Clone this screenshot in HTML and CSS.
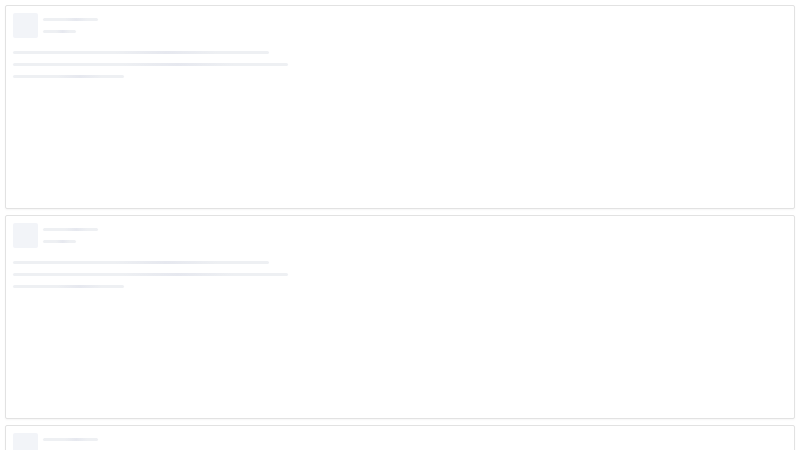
FILE: index.html
```html
<!DOCTYPE html>
<html>
<head>
<meta charset="utf-8">
<link rel="stylesheet" href="styles.css">
</head>
<body>
<div class="list">
  <div class="card">
    <div class="head">
      <div class="avatar"></div>
      <div class="meta">
        <div class="bar title"></div>
        <div class="bar sub"></div>
      </div>
    </div>
    <div class="lines">
      <div class="bar l1"></div>
      <div class="bar l2"></div>
      <div class="bar l3"></div>
    </div>
  </div>
  <div class="card">
    <div class="head">
      <div class="avatar"></div>
      <div class="meta">
        <div class="bar title"></div>
        <div class="bar sub"></div>
      </div>
    </div>
    <div class="lines">
      <div class="bar l1"></div>
      <div class="bar l2"></div>
      <div class="bar l3"></div>
    </div>
  </div>
  <div class="card">
    <div class="head">
      <div class="avatar"></div>
      <div class="meta">
        <div class="bar title"></div>
        <div class="bar sub"></div>
      </div>
    </div>
    <div class="lines">
      <div class="bar l1"></div>
      <div class="bar l2"></div>
      <div class="bar l3"></div>
    </div>
  </div>
</div>
</body>
</html>
```
FILE: styles.css
```css
html, body {
  margin: 0;
  background: #ffffff;
  font-family: "Liberation Sans", sans-serif;
}
body {
  padding: 5px;
  overflow: hidden;
  height: 450px;
  box-sizing: border-box;
}
.list {
  display: flex;
  flex-direction: column;
  gap: 6px;
}
.card {
  box-sizing: border-box;
  width: 790px;
  height: 204px;
  flex-shrink: 0;
  border: 1px solid #e2e2e2;
  border-radius: 2px;
  box-shadow: 0 1px 2px rgba(0,0,0,0.04);
  padding: 7px;
  background: #fff;
}
.head {
  display: flex;
  gap: 5px;
}
.avatar {
  width: 25px;
  height: 25px;
  background: #f2f4f8;
  border-radius: 2px;
}
.meta {
  display: flex;
  flex-direction: column;
  padding-top: 5px;
  gap: 9px;
}
.bar {
  height: 3px;
  border-radius: 2px;
  background: linear-gradient(90deg, #eef0f3 0%, #eef0f3 40%, #e6e8ef 60%, #eef0f3 80%, #eef0f3 100%);
}
.title { width: 55px; }
.sub { width: 33px; }
.lines {
  display: flex;
  flex-direction: column;
  gap: 9px;
  margin-top: 13px;
}
.l1 { width: 256px; }
.l2 { width: 275px; }
.l3 { width: 111px; }
```
